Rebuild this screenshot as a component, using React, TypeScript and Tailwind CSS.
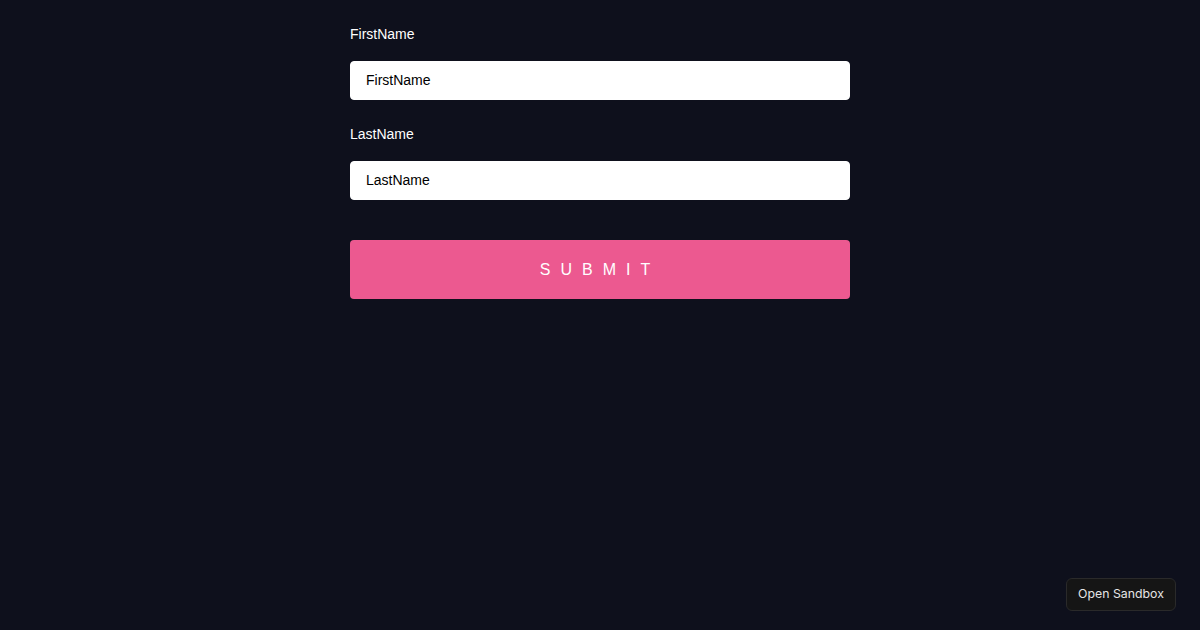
export default function App() {
  return (
    <div className="min-h-[630px] bg-[#0e101c] font-['Liberation_Sans',Arial,sans-serif] flow-root">
      <form className="max-w-[500px] mx-auto" onSubmit={(e) => e.preventDefault()}>
        <label className="block mt-5 mb-[13px] text-sm leading-[28px] text-white font-extralight">FirstName</label>
        <input
          className="block box-border w-full rounded border border-white bg-white px-[15px] py-[10px] text-sm leading-[17px] text-black placeholder:text-black outline-none"
          placeholder="FirstName"
        />
        <label className="block mt-5 mb-[13px] text-sm leading-[28px] text-white font-extralight">LastName</label>
        <input
          className="block box-border w-full rounded border border-white bg-white px-[15px] py-[10px] text-sm leading-[17px] text-black placeholder:text-black outline-none"
          placeholder="LastName"
        />
        <button
          type="submit"
          className="block w-full mt-10 rounded bg-[#ec5990] p-5 text-base leading-[19px] font-thin uppercase tracking-[10px] text-white"
        >
          Submit
        </button>
      </form>
      <button className="fixed right-[24px] bottom-[19px] h-[33px] w-[110px] rounded-md border border-[#2a2a2a] bg-[#151515] text-[12.3px] text-[#e5e5e5] font-['Inter',sans-serif]">
        Open Sandbox
      </button>
    </div>
  )
}
